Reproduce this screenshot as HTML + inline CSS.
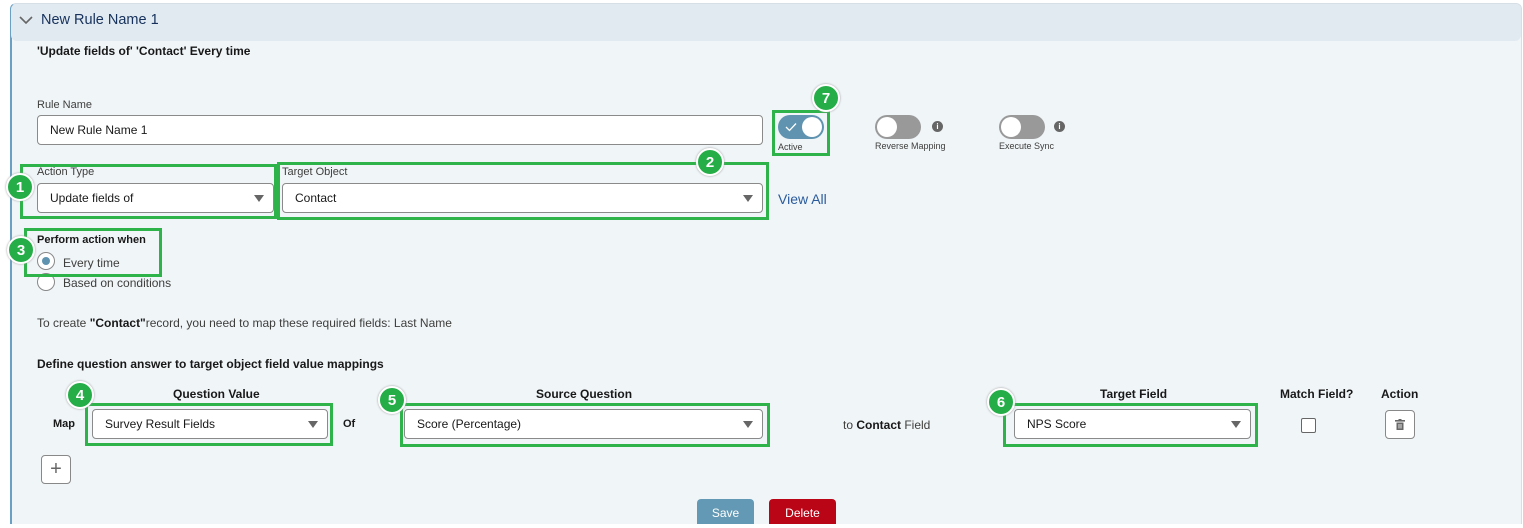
<!DOCTYPE html>
<html><head><meta charset="utf-8"><style>
*{box-sizing:border-box;margin:0;padding:0}
body{width:1523px;height:528px;background:#fff;font-family:"Liberation Sans",sans-serif;color:#181818;position:relative;overflow:hidden}
.a{position:absolute}
.panel{left:10px;top:3px;width:1512px;height:521px;background:#f0f5f8;border-left:2px solid #6aa0c4;border-top:1px solid #d6dfe6;border-right:1px solid #d6dfe6;border-radius:6px 6px 0 0}
.hdr{left:11px;top:4px;width:1510px;height:37px;background:#e2eaf1;border-radius:5px 5px 6px 6px}
.lbl{font-size:11px;color:#3e3e3c}
.inp{background:#fff;border:1px solid #8a8a8a;border-radius:4px;font-size:12px;padding-left:12px;display:flex;align-items:center}
.dd::after{content:"";position:absolute;right:9px;top:50%;margin-top:-3px;border-left:5px solid transparent;border-right:5px solid transparent;border-top:7px solid #666}
.g{border:3px solid #2db34a}
.c{width:28px;height:28px;border-radius:50%;background:#25ad48;color:#fff;font-weight:bold;font-size:15px;display:flex;align-items:center;justify-content:center;border:2px solid #fff;box-shadow:0 0 2px #999}
.b{font-weight:bold;font-size:12px}
.tg{width:46px;height:24px;border-radius:12px;background:#999}
.tg i{position:absolute;top:2px;left:2px;width:20px;height:20px;border-radius:50%;background:#fff}
.info{width:11px;height:11px;border-radius:50%;background:#666;color:#fff;font-size:8px;font-weight:bold;display:flex;align-items:center;justify-content:center}
</style></head><body>
<div class="a panel"></div>
<div class="a hdr"></div>
<svg class="a" style="left:19px;top:16px" width="14" height="9"><path d="M1 1 L7 7 L13 1" stroke="#666" stroke-width="1.6" fill="none"/></svg>
<div class="a" style="left:41px;top:12px;font-size:14.5px;color:#16325c">New Rule Name 1</div>
<div class="a b" style="left:37px;top:44px">'Update fields of' 'Contact' Every time</div>

<div class="a lbl" style="left:37px;top:99px">Rule Name</div>
<div class="a inp" style="left:37px;top:115px;width:726px;height:30px">New Rule Name 1</div>

<div class="a tg" style="left:778px;top:115px;background:#5f93b0"><i style="left:24px"></i><svg class="a" style="left:7px;top:7px" width="12" height="10"><path d="M1 5 L4.5 8.5 L11 1.5" stroke="#fff" stroke-width="1.3" fill="none"/></svg></div>
<div class="a" style="left:778px;top:142px;font-size:9px;color:#3e3e3c">Active</div>
<div class="a g" style="left:772px;top:110px;width:58px;height:46px"></div>
<div class="a c" style="left:812px;top:84px">7</div>

<div class="a tg" style="left:875px;top:115px"><i></i></div>
<div class="a info" style="left:932px;top:121px">i</div>
<div class="a" style="left:875px;top:141px;font-size:9px;color:#3e3e3c">Reverse Mapping</div>
<div class="a tg" style="left:999px;top:115px"><i></i></div>
<div class="a info" style="left:1054px;top:121px">i</div>
<div class="a" style="left:999px;top:141px;font-size:9px;color:#3e3e3c">Execute Sync</div>

<div class="a lbl" style="left:37px;top:166px">Action Type</div>
<div class="a inp dd" style="left:37px;top:183px;width:237px;height:30px">Update fields of</div>
<div class="a lbl" style="left:282px;top:166px">Target Object</div>
<div class="a inp dd" style="left:282px;top:183px;width:481px;height:30px">Contact</div>
<div class="a" style="left:778px;top:191px;font-size:14px;color:#2a5b9c">View All</div>
<div class="a g" style="left:20px;top:164px;width:257px;height:55px"></div>
<div class="a g" style="left:277px;top:162px;width:492px;height:58px"></div>
<div class="a c" style="left:6px;top:173px">1</div>
<div class="a c" style="left:696px;top:148px">2</div>

<div class="a b" style="left:37px;top:234px;font-size:11px">Perform action when</div>
<div class="a" style="left:37px;top:252px;width:18px;height:18px;border-radius:50%;border:1px solid #888;background:#fff"><div class="a" style="left:4px;top:4px;width:8px;height:8px;border-radius:50%;background:#5f93b0"></div></div>
<div class="a" style="left:63px;top:256px;font-size:12px;color:#3e3e3c">Every time</div>
<div class="a" style="left:37px;top:273px;width:18px;height:18px;border-radius:50%;border:1px solid #888;background:#fff"></div>
<div class="a" style="left:63px;top:276px;font-size:12px;color:#3e3e3c">Based on conditions</div>
<div class="a g" style="left:24px;top:228px;width:138px;height:49px"></div>
<div class="a c" style="left:7px;top:236px">3</div>

<div class="a" style="left:37px;top:316px;font-size:12px;color:#3e3e3c">To create <b style="color:#181818">"Contact"</b>record, you need to map these required fields: Last Name</div>
<div class="a b" style="left:37px;top:357px">Define question answer to target object field value mappings</div>

<div class="a b" style="left:173px;top:387px">Question Value</div>
<div class="a b" style="left:536px;top:387px">Source Question</div>
<div class="a b" style="left:1100px;top:387px">Target Field</div>
<div class="a b" style="left:1280px;top:387px">Match Field?</div>
<div class="a b" style="left:1381px;top:387px">Action</div>

<div class="a b" style="left:53px;top:418px;font-size:11px">Map</div>
<div class="a inp dd" style="left:92px;top:409px;width:236px;height:30px">Survey Result Fields</div>
<div class="a b" style="left:343px;top:418px;font-size:11px">Of</div>
<div class="a inp dd" style="left:404px;top:409px;width:359px;height:30px">Score (Percentage)</div>
<div class="a" style="left:843px;top:418px;font-size:12px;color:#3e3e3c">to <b style="color:#181818">Contact</b> Field</div>
<div class="a inp dd" style="left:1014px;top:409px;width:237px;height:30px">NPS Score</div>
<div class="a" style="left:1301px;top:418px;width:15px;height:15px;border:1px solid #666;border-radius:2px;background:#fff"></div>
<div class="a" style="left:1385px;top:410px;width:30px;height:29px;border:1px solid #888;border-radius:4px;background:#fff"><svg class="a" style="left:9px;top:8px" width="10" height="11"><rect x="0" y="1" width="10" height="1.6" fill="#666"/><rect x="3.5" y="0" width="3" height="1.5" fill="#666"/><path d="M1.5 3.5 H8.5 V11 H1.5Z" fill="#666"/><path d="M4 5 V9.5 M6 5 V9.5" stroke="#fff" stroke-width="0.8"/></svg></div>

<div class="a g" style="left:85px;top:403px;width:248px;height:43px"></div>
<div class="a g" style="left:400px;top:403px;width:370px;height:44px"></div>
<div class="a g" style="left:1003px;top:403px;width:255px;height:44px"></div>
<div class="a c" style="left:66px;top:381px">4</div>
<div class="a c" style="left:378px;top:386px">5</div>
<div class="a c" style="left:987px;top:388px">6</div>

<div class="a" style="left:41px;top:455px;width:30px;height:29px;border:1px solid #888;border-radius:4px;background:#fff;font-size:20px;color:#666;display:flex;align-items:center;justify-content:center;font-weight:300">+</div>

<div class="a" style="left:697px;top:499px;width:57px;height:29px;background:#6399b4;border-radius:4px 4px 0 0;color:#fff;font-size:12px;display:flex;align-items:center;justify-content:center;padding-bottom:2px">Save</div>
<div class="a" style="left:769px;top:499px;width:67px;height:29px;background:#ba0517;border-radius:4px 4px 0 0;color:#fff;font-size:12px;display:flex;align-items:center;justify-content:center;padding-bottom:2px">Delete</div>
<div class="a" style="left:0;top:524px;width:1523px;height:4px;background:#fff"></div>
</body></html>
